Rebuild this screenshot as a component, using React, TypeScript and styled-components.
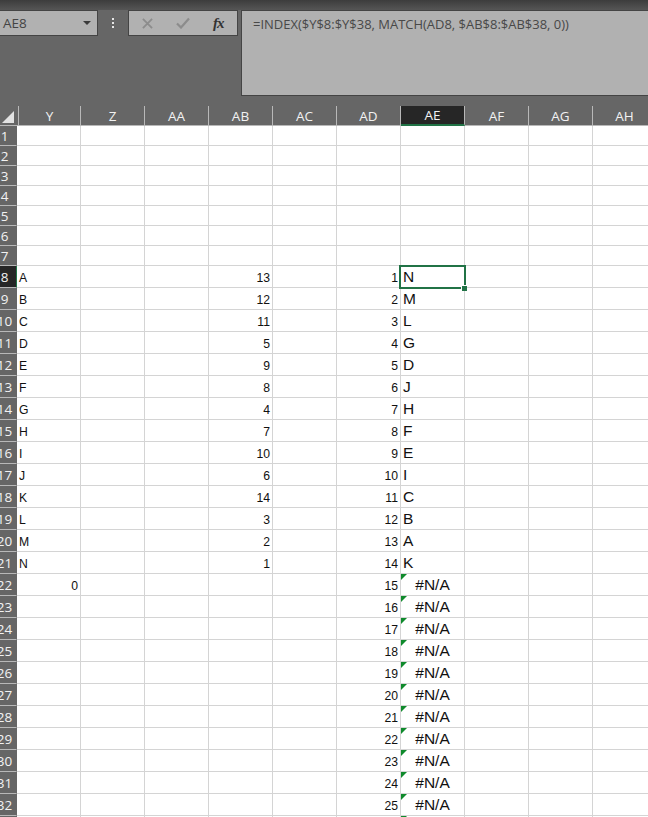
import * as React from 'react';
import styled, { createGlobalStyle } from 'styled-components';

const GlobalStyle = createGlobalStyle`
  html, body {
    margin: 0;
    padding: 0;
    background: #ffffff;
  }
`;

const Window = styled.div`
  width: 648px;
  height: 817px;
  overflow: hidden;
  display: flex;
  flex-direction: column;
  font-family: "Open Sans", "Liberation Sans", sans-serif;
`;

const TopEdge = styled.div`
  height: 10px;
  flex: none;
  background: linear-gradient(#3c3c3c, #555555);
`;

const FormulaArea = styled.div`
  height: 96px;
  flex: none;
  box-sizing: border-box;
  background: #666666;
  display: flex;
  align-items: flex-start;
`;

const NameBox = styled.div`
  width: 98px;
  height: 26px;
  flex: none;
  box-sizing: border-box;
  background: #b1b1b1;
  border: 1px solid #444444;
  border-left: none;
  display: flex;
  align-items: center;
  justify-content: space-between;
  padding: 0 6px 0 3px;
  font-size: 13.5px;
  color: #444444;
`;

const Caret = styled.span`
  width: 0;
  height: 0;
  border-left: 4px solid transparent;
  border-right: 4px solid transparent;
  border-top: 4px solid #3a3a3a;
`;

const Grip = styled.div`
  width: 30px;
  height: 26px;
  flex: none;
  display: flex;
  flex-direction: column;
  align-items: center;
  justify-content: center;
  gap: 2px;
`;

const GripDot = styled.span`
  width: 2px;
  height: 2px;
  background: #e6e6e6;
`;

const FunctionBox = styled.div`
  width: 110px;
  height: 26px;
  flex: none;
  box-sizing: border-box;
  background: #b1b1b1;
  border: 1px solid #444444;
  display: flex;
  align-items: center;
  padding: 0 0 0 13px;
  gap: 23px;
`;

const FxLabel = styled.span`
  font-family: "Liberation Serif", serif;
  font-style: italic;
  font-weight: bold;
  font-size: 15px;
  letter-spacing: -1px;
  color: #333333;
`;

const FormulaInput = styled.div`
  width: 407px;
  height: 86px;
  flex: none;
  margin-left: 3px;
  box-sizing: border-box;
  background: #b1b1b1;
  border: 1px solid #444444;
  border-right: none;
  padding: 4px 0 0 11px;
  font-size: 12.97px;
  line-height: 18px;
  color: #484848;
  white-space: nowrap;
`;

const HeaderRow = styled.div`
  height: 20px;
  flex: none;
  display: flex;
  background: #666666;
  border-bottom: 1px solid #b8b8b8;
  box-sizing: border-box;
`;

const Corner = styled.div`
  width: 19px;
  flex: none;
  box-sizing: border-box;
  border-right: 1px solid #b8b8b8;
  display: flex;
  align-items: flex-end;
  justify-content: flex-start;
  padding: 0 0 2px 2px;
`;

const ColumnHeader = styled.div<{ $w: number; $active?: boolean }>`
  width: ${(p) => p.$w}px;
  flex: none;
  box-sizing: border-box;
  display: flex;
  align-items: center;
  justify-content: center;
  font-size: 13.5px;
  color: #f2f2f2;
  border-right: 1px solid #b8b8b8;
  background: ${(p) => (p.$active ? '#262626' : 'transparent')};
  border-bottom: ${(p) => (p.$active ? '2px solid #217346' : 'none')};
  margin-bottom: ${(p) => (p.$active ? '-1px' : '0')};
`;

const Row = styled.div<{ $h: number }>`
  height: ${(p) => p.$h}px;
  flex: none;
  display: flex;
`;

const RowHeader = styled.div<{ $active?: boolean }>`
  width: 17px;
  flex: none;
  box-sizing: border-box;
  background: ${(p) => (p.$active ? '#262626' : '#666666')};
  border-bottom: 1px solid #b8b8b8;
  border-right: 1px solid ${(p) => (p.$active ? '#217346' : '#666666')};
  color: #f2f2f2;
  font-size: 13.5px;
  display: flex;
  align-items: center;
  white-space: nowrap;
`;

/* the sheet is cropped on the left, so the numbers centre near the page edge */
const RowLabel = styled.span`
  width: 9px;
  flex: none;
  display: flex;
  justify-content: center;
`;

const Cell = styled.div<{ $w: number; $align?: string; $large?: boolean }>`
  position: relative;
  width: ${(p) => p.$w}px;
  flex: none;
  box-sizing: border-box;
  background: #ffffff;
  border-right: 1px solid #d4d4d4;
  border-bottom: 1px solid #d4d4d4;
  display: flex;
  align-items: flex-end;
  justify-content: ${(p) => p.$align ?? 'flex-start'};
  padding: 0 2px ${(p) => (p.$large ? '1px' : '0')} 2px;
  font-family: "Liberation Sans", Arial, sans-serif;
  font-size: ${(p) => (p.$large ? '15.5px' : '12.2px')};
  line-height: 18px;
  color: #111111;
`;

const ErrorFlag = styled.span`
  position: absolute;
  left: 0;
  top: 0;
  width: 0;
  height: 0;
  border-top: 6px solid #0f8a2c;
  border-right: 6px solid transparent;
`;

const Selection = styled.span`
  position: absolute;
  left: -2px;
  top: -1px;
  width: 67px;
  height: 24px;
  box-sizing: border-box;
  border: 2px solid #217346;
  z-index: 2;
`;

const FillHandle = styled.span`
  position: absolute;
  right: -3px;
  bottom: -4px;
  width: 5px;
  height: 5px;
  background: #217346;
  border-top: 1px solid #ffffff;
  border-left: 1px solid #ffffff;
`;

const columns: [string, number][] = [
  ['Y', 62],
  ['Z', 64],
  ['AA', 64],
  ['AB', 64],
  ['AC', 64],
  ['AD', 64],
  ['AE', 64],
  ['AF', 64],
  ['AG', 64],
  ['AH', 64],
];

const letters = ['A', 'B', 'C', 'D', 'E', 'F', 'G', 'H', 'I', 'J', 'K', 'L', 'M', 'N'];
const abValues = [13, 12, 11, 5, 9, 8, 4, 7, 10, 6, 14, 3, 2, 1];
const results = ['N', 'M', 'L', 'G', 'D', 'J', 'H', 'F', 'E', 'I', 'C', 'B', 'A', 'K'];

function cellFor(col: string, row: number): React.ReactNode {
  const idx = row - 8;
  if (col === 'Y' && idx >= 0 && idx < 14) return letters[idx];
  if (col === 'Y' && row === 22) return 0;
  if (col === 'AB' && idx >= 0 && idx < 14) return abValues[idx];
  if (col === 'AD' && idx >= 0 && idx < 25) return idx + 1;
  if (col === 'AE' && idx >= 0 && idx < 25) return idx < 14 ? results[idx] : '#N/A';
  return null;
}

function alignFor(col: string, row: number) {
  if (col === 'AB' || col === 'AD' || (col === 'Y' && row === 22)) return 'flex-end';
  if (col === 'AE' && row >= 22) return 'center';
  return 'flex-start';
}

const rows = Array.from({ length: 33 }, (_, i) => i + 1);

export default function App() {
  return (
    <Window>
      <GlobalStyle />
      <TopEdge />
      <FormulaArea>
        <NameBox>
          AE8
          <Caret />
        </NameBox>
        <Grip>
          <GripDot />
          <GripDot />
          <GripDot />
        </Grip>
        <FunctionBox>
          <svg width="11" height="11" viewBox="0 0 12 12">
            <path d="M1 1 11 11M11 1 1 11" stroke="#8c8c8c" strokeWidth="2" fill="none" />
          </svg>
          <svg width="14" height="12" viewBox="0 0 14 12">
            <path d="M1 6.5 5 10.5 13 1.5" stroke="#8c8c8c" strokeWidth="2.2" fill="none" />
          </svg>
          <FxLabel>fx</FxLabel>
        </FunctionBox>
        <FormulaInput>=INDEX($Y$8:$Y$38, MATCH(AD8, $AB$8:$AB$38, 0))</FormulaInput>
      </FormulaArea>
      <HeaderRow>
        <Corner>
          <svg width="12" height="12" viewBox="0 0 12 12">
            <path d="M12 0V12H0Z" fill="#e2e2e2" />
          </svg>
        </Corner>
        {columns.map(([name, w]) => (
          <ColumnHeader key={name} $w={w} $active={name === 'AE'}>
            {name}
          </ColumnHeader>
        ))}
      </HeaderRow>
      {rows.map((row) => (
        <Row key={row} $h={row < 8 ? 20 : 22}>
          <RowHeader $active={row === 8}>
            <RowLabel>{row}</RowLabel>
          </RowHeader>
          {columns.map(([name, w]) => (
            <Cell
              key={name}
              $w={name === 'Y' ? 64 : w}
              $align={alignFor(name, row)}
              $large={name === 'AE'}
            >
              {cellFor(name, row)}
              {name === 'AE' && row >= 22 && <ErrorFlag />}
              {name === 'AE' && row === 8 && (
                <Selection>
                  <FillHandle />
                </Selection>
              )}
            </Cell>
          ))}
        </Row>
      ))}
    </Window>
  );
}
